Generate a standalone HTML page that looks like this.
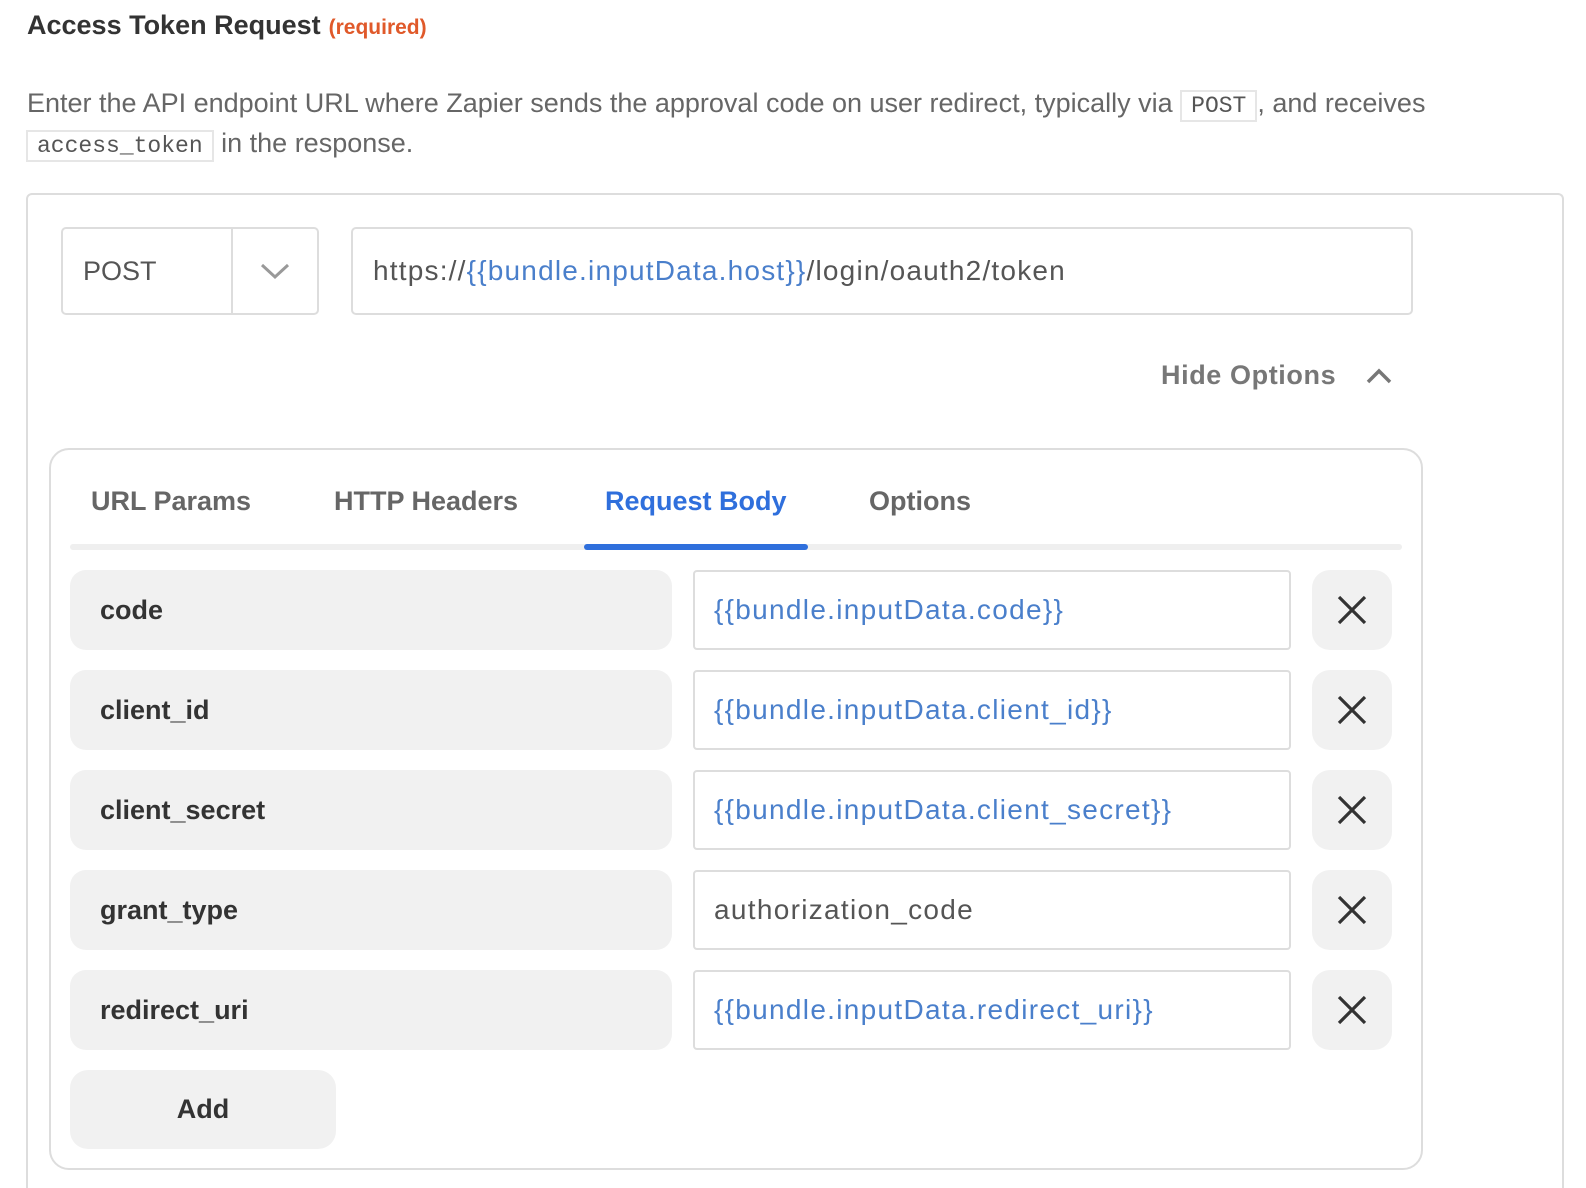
<!DOCTYPE html>
<html><head><meta charset="utf-8"><style>
*{box-sizing:border-box;margin:0;padding:0}
html,body{width:1586px;height:1188px;overflow:hidden}
body{background:#fff;font-family:"Liberation Sans",sans-serif;position:relative;color:#666}
.a{position:absolute}
.title{left:27px;top:10px;font-size:27px;font-weight:bold;color:#333;white-space:nowrap}
.title span{color:#e0592a;font-size:21px;margin-left:8px}
.desc{left:27px;font-size:27px;color:#666;white-space:nowrap;line-height:36px}
code{font-family:"Liberation Mono",monospace;font-size:23px;color:#555;border:2px solid #e6e6e6;padding:1px 9px}
.outer{left:26px;top:193px;width:1538px;height:995px;border:2px solid #ddd;border-bottom:none;border-radius:6px 6px 0 0}
.sel{left:61px;top:227px;width:258px;height:88px;border:2px solid #ddd;border-radius:5px}
.sel .div{position:absolute;left:168px;top:0;bottom:0;width:2px;background:#ddd}
.url{left:351px;top:227px;width:1062px;height:88px;border:2px solid #ddd;border-radius:5px;font-size:28px;letter-spacing:1.2px;color:#555;padding-left:20px;line-height:84px;white-space:nowrap}
.blue{color:#4a7fcb !important}
.hide{left:1161px;top:360px;font-size:27px;letter-spacing:0.6px;font-weight:bold;color:#777;white-space:nowrap}
.panel{left:49px;top:448px;width:1374px;height:722px;border:2px solid #ddd;border-radius:20px}
.tab{top:486px;font-size:27px;font-weight:bold;color:#666;white-space:nowrap}
.gl{left:70px;top:544px;width:1332px;height:6px;background:#efefef;border-radius:3px}
.ul{left:584px;top:544px;width:224px;height:6px;background:#2f6fdc;border-radius:3px}
.key{left:70px;width:602px;height:80px;background:#f1f1f1;border-radius:16px;font-size:27px;font-weight:bold;color:#333;padding-left:30px;line-height:80px}
.val{left:693px;width:598px;height:80px;border:2px solid #ddd;border-radius:4px;font-size:28px;letter-spacing:1.3px;padding-left:19px;line-height:76px;white-space:nowrap;color:#555}
.x{left:1312px;width:80px;height:80px;background:#f1f1f1;border-radius:18px}
.add{left:70px;top:1070px;width:266px;height:79px;background:#f1f1f1;border-radius:18px;font-size:27px;font-weight:bold;color:#333;text-align:center;line-height:79px}
</style></head><body>
<div class="a title">Access Token Request<span>(required)</span></div>
<div class="a desc" style="top:85px">Enter the API endpoint URL where Zapier sends the approval code on user redirect, typically via <code>POST</code>, and receives</div>
<div class="a desc" style="top:125px"><code style="margin-left:-1px">access_token</code> in the response.</div>
<div class="a outer"></div>
<div class="a sel"><div style="position:absolute;left:20px;top:0;line-height:84px;font-size:27px;color:#555">POST</div><div class="div"></div>
<svg style="position:absolute;left:196px;top:32px" width="32" height="20" viewBox="0 0 32 20"><path d="M3 4 L16 16 L29 4" fill="none" stroke="#999" stroke-width="3"/></svg></div>
<div class="a url">https://<span class="blue">{{bundle.inputData.host}}</span>/login/oauth2/token</div>
<div class="a hide">Hide Options</div>
<svg class="a" style="left:1365px;top:366px" width="28" height="20" viewBox="0 0 28 20"><path d="M3 16 L14 5 L25 16" fill="none" stroke="#777" stroke-width="3.5"/></svg>
<div class="a panel"></div>
<div class="a tab" style="left:91px">URL Params</div>
<div class="a tab" style="left:334px">HTTP Headers</div>
<div class="a tab" style="left:605px;color:#2f6fdc">Request Body</div>
<div class="a tab" style="left:869px">Options</div>
<div class="a gl"></div><div class="a ul"></div>

<div class="a key" style="top:570px">code</div>
<div class="a val blue" style="top:570px">{{bundle.inputData.code}}</div>
<div class="a key" style="top:670px">client_id</div>
<div class="a val blue" style="top:670px">{{bundle.inputData.client_id}}</div>
<div class="a key" style="top:770px">client_secret</div>
<div class="a val blue" style="top:770px">{{bundle.inputData.client_secret}}</div>
<div class="a key" style="top:870px">grant_type</div>
<div class="a val" style="top:870px">authorization_code</div>
<div class="a key" style="top:970px">redirect_uri</div>
<div class="a val blue" style="top:970px">{{bundle.inputData.redirect_uri}}</div>

<svg class="a x" style="top:570px" viewBox="0 0 80 80"><path d="M27 27 L53 53 M53 27 L27 53" stroke="#333" stroke-width="3.2"/></svg>
<svg class="a x" style="top:670px" viewBox="0 0 80 80"><path d="M27 27 L53 53 M53 27 L27 53" stroke="#333" stroke-width="3.2"/></svg>
<svg class="a x" style="top:770px" viewBox="0 0 80 80"><path d="M27 27 L53 53 M53 27 L27 53" stroke="#333" stroke-width="3.2"/></svg>
<svg class="a x" style="top:870px" viewBox="0 0 80 80"><path d="M27 27 L53 53 M53 27 L27 53" stroke="#333" stroke-width="3.2"/></svg>
<svg class="a x" style="top:970px" viewBox="0 0 80 80"><path d="M27 27 L53 53 M53 27 L27 53" stroke="#333" stroke-width="3.2"/></svg>
<div class="a add">Add</div>
</body></html>
